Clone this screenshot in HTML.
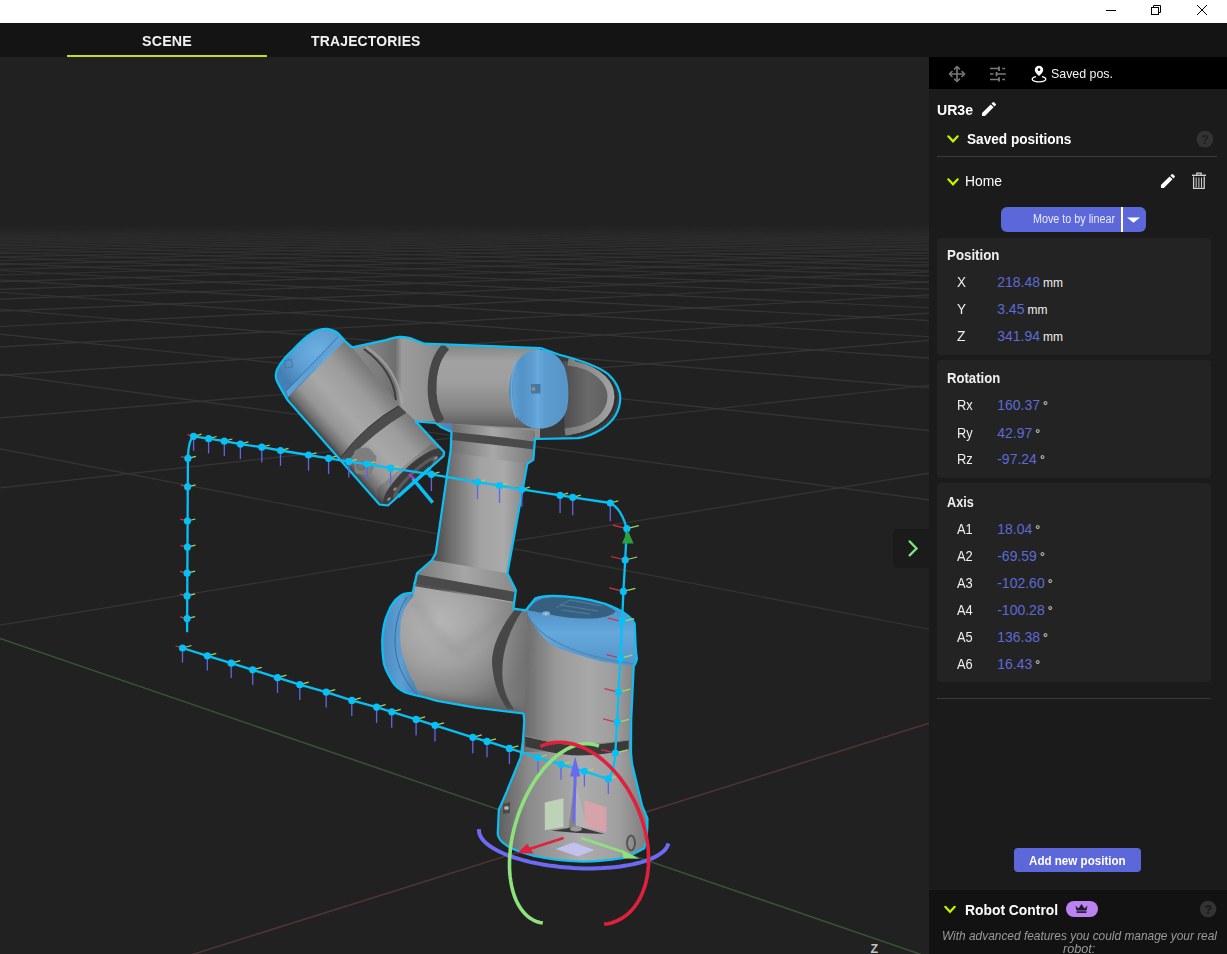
<!DOCTYPE html>
<html><head><meta charset="utf-8">
<style>
*{margin:0;padding:0;box-sizing:border-box}
html,body{width:1227px;height:954px;overflow:hidden;background:#222;font-family:"Liberation Sans",sans-serif;color:#fff}
.abs{position:absolute}
.t{position:absolute;white-space:nowrap;line-height:1}
svg{position:absolute;left:0;top:0}
</style></head><body>
<div class="abs" style="left:0;top:57px;width:929px;height:897px;background:#212121"></div>
<svg width="1227" height="954" viewBox="0 0 1227 954" style="position:absolute;left:0;top:0"><defs><linearGradient id="fog" gradientUnits="userSpaceOnUse" x1="0" y1="202.0" x2="0" y2="954"><stop offset="0.0000" stop-color="#353535" stop-opacity="0.000"/><stop offset="0.0003" stop-color="#353535" stop-opacity="0.000"/><stop offset="0.0014" stop-color="#353535" stop-opacity="0.000"/><stop offset="0.0034" stop-color="#353535" stop-opacity="0.000"/><stop offset="0.0063" stop-color="#353535" stop-opacity="0.000"/><stop offset="0.0103" stop-color="#353535" stop-opacity="0.000"/><stop offset="0.0154" stop-color="#353535" stop-opacity="0.000"/><stop offset="0.0216" stop-color="#353535" stop-opacity="0.000"/><stop offset="0.0290" stop-color="#353535" stop-opacity="0.000"/><stop offset="0.0376" stop-color="#353535" stop-opacity="0.088"/><stop offset="0.0474" stop-color="#353535" stop-opacity="0.346"/><stop offset="0.0584" stop-color="#353535" stop-opacity="0.533"/><stop offset="0.0707" stop-color="#353535" stop-opacity="0.672"/><stop offset="0.0844" stop-color="#353535" stop-opacity="0.779"/><stop offset="0.0993" stop-color="#353535" stop-opacity="0.862"/><stop offset="0.1156" stop-color="#353535" stop-opacity="0.929"/><stop offset="0.1332" stop-color="#353535" stop-opacity="0.982"/><stop offset="0.1522" stop-color="#353535" stop-opacity="1.000"/><stop offset="0.1726" stop-color="#353535" stop-opacity="1.000"/><stop offset="0.1944" stop-color="#353535" stop-opacity="1.000"/><stop offset="0.2176" stop-color="#353535" stop-opacity="1.000"/><stop offset="0.2423" stop-color="#353535" stop-opacity="1.000"/><stop offset="0.2684" stop-color="#353535" stop-opacity="1.000"/><stop offset="0.2960" stop-color="#353535" stop-opacity="1.000"/><stop offset="0.3250" stop-color="#353535" stop-opacity="1.000"/><stop offset="0.3556" stop-color="#353535" stop-opacity="1.000"/><stop offset="0.3876" stop-color="#353535" stop-opacity="1.000"/><stop offset="0.4212" stop-color="#353535" stop-opacity="1.000"/><stop offset="0.4563" stop-color="#353535" stop-opacity="1.000"/><stop offset="0.4929" stop-color="#353535" stop-opacity="1.000"/><stop offset="0.5310" stop-color="#353535" stop-opacity="1.000"/><stop offset="0.5708" stop-color="#353535" stop-opacity="1.000"/><stop offset="0.6121" stop-color="#353535" stop-opacity="1.000"/><stop offset="0.6549" stop-color="#353535" stop-opacity="1.000"/><stop offset="0.6994" stop-color="#353535" stop-opacity="1.000"/><stop offset="0.7454" stop-color="#353535" stop-opacity="1.000"/><stop offset="0.7931" stop-color="#353535" stop-opacity="1.000"/><stop offset="0.8424" stop-color="#353535" stop-opacity="1.000"/><stop offset="0.8933" stop-color="#353535" stop-opacity="1.000"/><stop offset="0.9458" stop-color="#353535" stop-opacity="1.000"/><stop offset="1.0000" stop-color="#353535" stop-opacity="1.000"/></linearGradient><clipPath id="silh"><path d="M327.1 328.8 C334 330, 339 333, 341.5 337 L344.9 341 L352.2 347.3 L385.8 340.1 C392 338, 396 337, 400.3 336.8 C405 337, 409 337.5, 412.4 338.9 L424.4 343.7 L540.6 348.1 L559.3 354.7 C580 360, 598 366, 608 374 C617 382, 620.5 392, 620.3 398 C620 410, 614 421, 602.4 428.7 C592 435, 585 437.5, 578.1 438.1 L535 439 L533.3 459.8 L527.3 463.8 L507.4 573.3 L515.9 590.2 L513.4 608.6 L525.9 610.3 L535 598.6 C540 596.5, 546 595.8, 552.1 595.8 C565 596, 572 597, 578.6 597.9 C590 599.5, 598 601.5, 605.1 603.8 C615 607.5, 621 610.5, 626.3 614.4 C631 618, 634 621, 634.7 623.9 L635.8 649.3 L636.9 658.9 C636 663, 634.5 665, 633.7 666.3 L631.2 720 L631 752.5 L632 763.5 L642 805.3 L647.5 818.6 C647.5 830, 646.5 842, 644.2 848.3 C636 853, 630 856, 622.1 858.2 C605 861, 590 861.8, 578.1 861.5 C560 860.5, 545 858.5, 534 856 C522 852.5, 512 849, 507.6 846.1 C501 842, 498 838, 497.7 834 L498.8 809.7 L506.5 792.1 L520.6 757.4 L522.8 742 L524.3 720 L523.4 713.5 L475.6 707.6 L437.1 700.9 L425.3 697.5 C415 695.5, 410 694, 405.2 692.5 C398 689, 394 685, 391.8 680.8 C386 671, 383.5 666, 383.4 660.6 C382 650, 382 642, 382.5 635.5 C383.5 625, 385 619, 387.6 613.7 C390 607, 392 604, 395.1 600.3 C399 596, 402 594.5, 405.2 593.5 L412.7 592.7 L416.9 573.4 L432 560 L435.7 553.4 L450.7 449.8 L451.5 432 L440.6 427 L435.6 423 L415.7 421.5 L444.1 451.9 L443.6 455.9 L387.9 505.5 L379.5 504.5 L287.3 399.7 C283 392, 279 386, 276.5 380 C275 375, 276 370, 278.9 366.1 C283 360, 287 355, 291.4 351.4 C298 344, 305 337, 312.4 332.6 C317 330, 322 328.5, 327.1 328.8 Z"/></clipPath>
<linearGradient id="gArm" gradientUnits="userSpaceOnUse" x1="0.0" y1="345.0" x2="0.0" y2="428.0"><stop offset="0.000" stop-color="#858585"/><stop offset="0.200" stop-color="#a2a2a2"/><stop offset="0.450" stop-color="#9e9e9e"/><stop offset="0.750" stop-color="#868686"/><stop offset="1.000" stop-color="#5a5a5a"/></linearGradient>
<linearGradient id="gHous" gradientUnits="userSpaceOnUse" x1="560.0" y1="0.0" x2="612.0" y2="0.0"><stop offset="0.000" stop-color="#4a4a4a"/><stop offset="0.550" stop-color="#6a6a6a"/><stop offset="1.000" stop-color="#5e5e5e"/></linearGradient>
<linearGradient id="gRing" gradientUnits="userSpaceOnUse" x1="565.0" y1="0.0" x2="612.0" y2="0.0"><stop offset="0.000" stop-color="#7a7a7a"/><stop offset="1.000" stop-color="#a2a2a2"/></linearGradient>
<linearGradient id="gCap1" gradientUnits="userSpaceOnUse" x1="509.0" y1="0.0" x2="569.0" y2="0.0"><stop offset="0.000" stop-color="#4a86ba"/><stop offset="0.080" stop-color="#5d9dd0"/><stop offset="0.200" stop-color="#5292c6"/><stop offset="0.380" stop-color="#5c9ccf"/><stop offset="0.480" stop-color="#68aadd"/><stop offset="0.600" stop-color="#5c9ccf"/><stop offset="1.000" stop-color="#5794c8"/></linearGradient>
<linearGradient id="gW2" gradientUnits="userSpaceOnUse" x1="355.0" y1="0.0" x2="445.0" y2="0.0"><stop offset="0.000" stop-color="#8a8a8a"/><stop offset="0.300" stop-color="#7a7a7a"/><stop offset="0.450" stop-color="#6e6e6e"/><stop offset="0.520" stop-color="#9c9c9c"/><stop offset="0.750" stop-color="#949494"/><stop offset="1.000" stop-color="#858585"/></linearGradient>
<linearGradient id="gFore" gradientUnits="userSpaceOnUse" x1="436.0" y1="0.0" x2="533.0" y2="0.0"><stop offset="0.000" stop-color="#4e4e4e"/><stop offset="0.150" stop-color="#6e6e6e"/><stop offset="0.450" stop-color="#a2a2a2"/><stop offset="0.700" stop-color="#aaaaaa"/><stop offset="0.900" stop-color="#8a8a8a"/><stop offset="1.000" stop-color="#5e5e5e"/></linearGradient>
<linearGradient id="gCol" gradientUnits="userSpaceOnUse" x1="450.0" y1="0.0" x2="535.0" y2="0.0"><stop offset="0.000" stop-color="#6a6a6a"/><stop offset="0.500" stop-color="#a8a8a8"/><stop offset="1.000" stop-color="#7a7a7a"/></linearGradient>
<linearGradient id="gCol2" gradientUnits="userSpaceOnUse" x1="414.0" y1="0.0" x2="515.0" y2="0.0"><stop offset="0.000" stop-color="#777"/><stop offset="0.500" stop-color="#a6a6a6"/><stop offset="1.000" stop-color="#8a8a8a"/></linearGradient>
<linearGradient id="gW3" gradientUnits="userSpaceOnUse" x1="324.0" y1="442.0" x2="384.4" y2="388.1"><stop offset="0.000" stop-color="#3a3a3a"/><stop offset="0.080" stop-color="#6a6a6a"/><stop offset="0.220" stop-color="#959595"/><stop offset="0.450" stop-color="#a8a8a8"/><stop offset="0.750" stop-color="#9c9c9c"/><stop offset="1.000" stop-color="#7a7a7a"/></linearGradient>
<linearGradient id="gW3e" gradientUnits="userSpaceOnUse" x1="380.0" y1="500.0" x2="440.0" y2="450.0"><stop offset="0.000" stop-color="#8a8a8a"/><stop offset="1.000" stop-color="#6a6a6a"/></linearGradient>
<radialGradient id="gCap3" gradientUnits="userSpaceOnUse" cx="318.0" cy="352.0" r="42.0"><stop offset="0.000" stop-color="#6cb0e2"/><stop offset="0.550" stop-color="#5d9ed2"/><stop offset="1.000" stop-color="#4580b4"/></radialGradient>
<linearGradient id="gElb" gradientUnits="userSpaceOnUse" x1="420.0" y1="600.0" x2="470.0" y2="705.0"><stop offset="0.000" stop-color="#b0b0b0"/><stop offset="0.450" stop-color="#a0a0a0"/><stop offset="1.000" stop-color="#6e6e6e"/></linearGradient>
<linearGradient id="gElb2" gradientUnits="userSpaceOnUse" x1="0.0" y1="620.0" x2="0.0" y2="712.0"><stop offset="0.000" stop-color="#9a9a9a"/><stop offset="0.600" stop-color="#8a8a8a"/><stop offset="1.000" stop-color="#6a6a6a"/></linearGradient>
<radialGradient id="gElbR" gradientUnits="userSpaceOnUse" cx="440.0" cy="622.0" r="95.0"><stop offset="0.000" stop-color="#b6b6b6"/><stop offset="0.450" stop-color="#a2a2a2"/><stop offset="0.800" stop-color="#858585"/><stop offset="1.000" stop-color="#6c6c6c"/></radialGradient>
<linearGradient id="gElbS" gradientUnits="userSpaceOnUse" x1="500.0" y1="0.0" x2="530.0" y2="0.0"><stop offset="0.000" stop-color="#8a8a8a"/><stop offset="1.000" stop-color="#707070"/></linearGradient>
<filter id="bl4" x="-50%" y="-50%" width="200%" height="200%"><feGaussianBlur stdDeviation="4"/></filter>
<filter id="bl2" x="-50%" y="-50%" width="200%" height="200%"><feGaussianBlur stdDeviation="2"/></filter>
<linearGradient id="gElbC" gradientUnits="userSpaceOnUse" x1="383.0" y1="0.0" x2="414.0" y2="0.0"><stop offset="0.000" stop-color="#4d8cc2"/><stop offset="0.600" stop-color="#5c9ed3"/><stop offset="1.000" stop-color="#4a86ba"/></linearGradient>
<linearGradient id="gSh" gradientUnits="userSpaceOnUse" x1="524.0" y1="0.0" x2="633.0" y2="0.0"><stop offset="0.000" stop-color="#6a6a6a"/><stop offset="0.300" stop-color="#9a9a9a"/><stop offset="0.600" stop-color="#a8a8a8"/><stop offset="0.850" stop-color="#9c9c9c"/><stop offset="1.000" stop-color="#858585"/></linearGradient>
<linearGradient id="gCap2" gradientUnits="userSpaceOnUse" x1="0.0" y1="600.0" x2="0.0" y2="666.0"><stop offset="0.000" stop-color="#4a88be"/><stop offset="0.500" stop-color="#64a8dc"/><stop offset="1.000" stop-color="#5494c8"/></linearGradient>
<linearGradient id="gBase" gradientUnits="userSpaceOnUse" x1="498.0" y1="0.0" x2="648.0" y2="0.0"><stop offset="0.000" stop-color="#5e5e5e"/><stop offset="0.200" stop-color="#8a8a8a"/><stop offset="0.550" stop-color="#acacac"/><stop offset="0.800" stop-color="#a0a0a0"/><stop offset="1.000" stop-color="#7a7a7a"/></linearGradient><clipPath id="sc"><rect x="0" y="57" width="929" height="897"/></clipPath></defs><g clip-path="url(#sc)"><g stroke="url(#fog)" stroke-width="1.2" fill="none"><path d="M0.0 448.96L929.0 629.27"/><path d="M0.0 374.19L929.0 499.91"/><path d="M0.0 334.17L929.0 430.68"/><path d="M0.0 309.25L929.0 387.55"/><path d="M0.0 292.23L929.0 358.11"/><path d="M0.0 279.88L929.0 336.74"/><path d="M0.0 270.50L929.0 320.51"/><path d="M0.0 263.13L929.0 307.77"/><path d="M0.0 257.20L929.0 297.50"/><path d="M0.0 252.32L929.0 289.05"/><path d="M0.0 248.23L929.0 281.98"/><path d="M0.0 244.75L929.0 275.97"/><path d="M0.0 241.76L929.0 270.80"/><path d="M0.0 239.16L929.0 266.30"/><path d="M0.0 236.89L929.0 262.36"/><path d="M0.0 234.87L929.0 258.87"/><path d="M0.0 233.07L929.0 255.76"/><path d="M0.0 231.46L929.0 252.98"/><path d="M0.0 230.01L929.0 250.46"/><path d="M0.0 228.70L929.0 248.19"/><path d="M0.0 227.50L929.0 246.12"/><path d="M0.0 226.41L929.0 244.23"/><path d="M0.0 225.40L929.0 242.49"/><path d="M0.0 224.48L929.0 240.89"/><path d="M0.0 223.62L929.0 239.41"/><path d="M0.0 222.83L929.0 238.04"/><path d="M0.0 222.09L929.0 236.77"/><path d="M0.0 221.41L929.0 235.58"/><path d="M0.0 220.77L929.0 234.47"/><path d="M0.0 220.17L929.0 233.43"/><path d="M0.0 219.61L929.0 232.46"/><path d="M0.0 219.08L929.0 231.55"/><path d="M0.0 218.58L929.0 230.68"/><path d="M0.0 218.11L929.0 229.87"/><path d="M0.0 217.67L929.0 229.10"/><path d="M0.0 217.25L929.0 228.38"/><path d="M0.0 216.85L929.0 227.69"/><path d="M0.0 216.47L929.0 227.04"/><path d="M0.0 216.11L929.0 226.41"/><path d="M0.0 215.77L929.0 225.82"/><path d="M0.0 215.44L929.0 225.26"/><path d="M0.0 215.13L929.0 224.72"/><path d="M0.0 214.84L929.0 224.21"/><path d="M0.0 214.55L929.0 223.72"/><path d="M0.0 214.28L929.0 223.25"/><path d="M0.0 214.02L929.0 222.80"/><path d="M0.0 213.77L929.0 222.37"/><path d="M0.0 213.54L929.0 221.96"/><path d="M0.0 213.31L929.0 221.56"/><path d="M0.0 213.09L929.0 221.18"/><path d="M0.0 212.87L929.0 220.81"/><path d="M0.0 212.67L929.0 220.46"/><path d="M0.0 212.47L929.0 220.12"/><path d="M0.0 212.28L929.0 219.79"/><path d="M0.0 212.10L929.0 219.48"/><path d="M0.0 211.92L929.0 219.17"/><path d="M0.0 211.75L929.0 218.88"/><path d="M0.0 211.59L929.0 218.59"/><path d="M0.0 211.43L929.0 218.32"/><path d="M0.0 211.28L929.0 218.05"/><path d="M0.0 211.13L929.0 217.79"/><path d="M0.0 210.98L929.0 217.54"/><path d="M0.0 210.84L929.0 217.30"/><path d="M0.0 210.71L929.0 217.07"/><path d="M0.0 210.58L929.0 216.84"/><path d="M0.0 210.45L929.0 216.62"/><path d="M0.0 210.33L929.0 216.41"/><path d="M0.0 210.21L929.0 216.20"/><path d="M0.0 210.09L929.0 216.00"/><path d="M0.0 209.98L929.0 215.80"/><path d="M0.0 209.87L929.0 215.61"/><path d="M0.0 209.76L929.0 215.42"/><path d="M0.0 209.65L929.0 215.24"/><path d="M0.0 209.55L929.0 215.07"/><path d="M0.0 209.45L929.0 214.90"/><path d="M0.0 209.36L929.0 214.73"/><path d="M0.0 209.26L929.0 214.57"/><path d="M0.0 209.17L929.0 214.41"/><path d="M0.0 209.08L929.0 214.25"/><path d="M0.0 625.05L929.0 473.14"/><path d="M0.0 487.93L929.0 385.26"/><path d="M0.0 417.94L929.0 340.40"/><path d="M0.0 375.47L929.0 313.18"/><path d="M0.0 346.97L929.0 294.91"/><path d="M0.0 326.51L929.0 281.80"/><path d="M0.0 311.11L929.0 271.93"/><path d="M0.0 299.10L929.0 264.23"/><path d="M0.0 289.47L929.0 258.06"/><path d="M0.0 281.58L929.0 253.00"/><path d="M0.0 274.99L929.0 248.78"/><path d="M0.0 269.42L929.0 245.21"/><path d="M0.0 264.63L929.0 242.14"/><path d="M0.0 260.48L929.0 239.48"/><path d="M0.0 256.84L929.0 237.15"/><path d="M0.0 253.63L929.0 235.09"/><path d="M0.0 250.78L929.0 233.26"/><path d="M0.0 248.22L929.0 231.62"/><path d="M0.0 245.92L929.0 230.15"/><path d="M0.0 243.84L929.0 228.81"/><path d="M0.0 241.94L929.0 227.60"/><path d="M0.0 240.21L929.0 226.49"/><path d="M0.0 238.63L929.0 225.47"/><path d="M0.0 237.17L929.0 224.54"/><path d="M0.0 235.82L929.0 223.67"/><path d="M0.0 234.57L929.0 222.87"/><path d="M0.0 233.41L929.0 222.13"/><path d="M0.0 232.33L929.0 221.44"/><path d="M0.0 231.32L929.0 220.79"/><path d="M0.0 230.38L929.0 220.19"/><path d="M0.0 229.49L929.0 219.62"/><path d="M0.0 228.66L929.0 219.09"/><path d="M0.0 227.88L929.0 218.59"/><path d="M0.0 227.14L929.0 218.11"/><path d="M0.0 226.45L929.0 217.67"/><path d="M0.0 225.79L929.0 217.25"/><path d="M0.0 225.16L929.0 216.85"/><path d="M0.0 224.57L929.0 216.47"/><path d="M0.0 224.01L929.0 216.10"/><path d="M0.0 223.47L929.0 215.76"/><path d="M0.0 222.96L929.0 215.43"/><path d="M0.0 222.47L929.0 215.12"/><path d="M0.0 222.01L929.0 214.82"/><path d="M0.0 221.57L929.0 214.54"/><path d="M0.0 221.14L929.0 214.27"/><path d="M0.0 220.74L929.0 214.01"/><path d="M0.0 220.35L929.0 213.76"/><path d="M0.0 219.97L929.0 213.52"/><path d="M0.0 219.61L929.0 213.29"/><path d="M0.0 219.27L929.0 213.07"/><path d="M0.0 218.94L929.0 212.85"/><path d="M0.0 218.62L929.0 212.65"/><path d="M0.0 218.31L929.0 212.45"/><path d="M0.0 218.01L929.0 212.26"/><path d="M0.0 217.73L929.0 212.08"/><path d="M0.0 217.45L929.0 211.90"/><path d="M0.0 217.19L929.0 211.73"/><path d="M0.0 216.93L929.0 211.57"/><path d="M0.0 216.68L929.0 211.41"/><path d="M0.0 216.44L929.0 211.26"/><path d="M0.0 216.21L929.0 211.11"/><path d="M0.0 215.98L929.0 210.96"/><path d="M0.0 215.77L929.0 210.82"/><path d="M0.0 215.55L929.0 210.69"/><path d="M0.0 215.35L929.0 210.56"/><path d="M0.0 215.15L929.0 210.43"/><path d="M0.0 214.96L929.0 210.30"/><path d="M0.0 214.77L929.0 210.18"/><path d="M0.0 214.59L929.0 210.07"/><path d="M0.0 214.41L929.0 209.95"/><path d="M0.0 214.24L929.0 209.84"/><path d="M0.0 214.07L929.0 209.74"/><path d="M0.0 213.91L929.0 209.63"/><path d="M0.0 213.75L929.0 209.53"/><path d="M0.0 213.59L929.0 209.43"/><path d="M0.0 213.44L929.0 209.33"/><path d="M0.0 213.30L929.0 209.24"/><path d="M0.0 213.15L929.0 209.15"/><path d="M0.0 213.02L929.0 209.06"/></g>
<path d="M0 638.5L929 957.2" stroke="#365434" stroke-width="1.5"/>
<path d="M0 1014.9L929 723.2" stroke="#533333" stroke-width="1.5"/><path d="M327.1 328.8 C334 330, 339 333, 341.5 337 L344.9 341 L352.2 347.3 L385.8 340.1 C392 338, 396 337, 400.3 336.8 C405 337, 409 337.5, 412.4 338.9 L424.4 343.7 L540.6 348.1 L559.3 354.7 C580 360, 598 366, 608 374 C617 382, 620.5 392, 620.3 398 C620 410, 614 421, 602.4 428.7 C592 435, 585 437.5, 578.1 438.1 L535 439 L533.3 459.8 L527.3 463.8 L507.4 573.3 L515.9 590.2 L513.4 608.6 L525.9 610.3 L535 598.6 C540 596.5, 546 595.8, 552.1 595.8 C565 596, 572 597, 578.6 597.9 C590 599.5, 598 601.5, 605.1 603.8 C615 607.5, 621 610.5, 626.3 614.4 C631 618, 634 621, 634.7 623.9 L635.8 649.3 L636.9 658.9 C636 663, 634.5 665, 633.7 666.3 L631.2 720 L631 752.5 L632 763.5 L642 805.3 L647.5 818.6 C647.5 830, 646.5 842, 644.2 848.3 C636 853, 630 856, 622.1 858.2 C605 861, 590 861.8, 578.1 861.5 C560 860.5, 545 858.5, 534 856 C522 852.5, 512 849, 507.6 846.1 C501 842, 498 838, 497.7 834 L498.8 809.7 L506.5 792.1 L520.6 757.4 L522.8 742 L524.3 720 L523.4 713.5 L475.6 707.6 L437.1 700.9 L425.3 697.5 C415 695.5, 410 694, 405.2 692.5 C398 689, 394 685, 391.8 680.8 C386 671, 383.5 666, 383.4 660.6 C382 650, 382 642, 382.5 635.5 C383.5 625, 385 619, 387.6 613.7 C390 607, 392 604, 395.1 600.3 C399 596, 402 594.5, 405.2 593.5 L412.7 592.7 L416.9 573.4 L432 560 L435.7 553.4 L450.7 449.8 L451.5 432 L440.6 427 L435.6 423 L415.7 421.5 L444.1 451.9 L443.6 455.9 L387.9 505.5 L379.5 504.5 L287.3 399.7 C283 392, 279 386, 276.5 380 C275 375, 276 370, 278.9 366.1 C283 360, 287 355, 291.4 351.4 C298 344, 305 337, 312.4 332.6 C317 330, 322 328.5, 327.1 328.8 Z" fill="#8e8e8e"/>
<path d="M405.0 337.5 L424.4 343.7 L540.6 348.1 L545.0 429.0 L411.0 421.5 L405.0 410.0 Z" fill="url(#gArm)"/>
<path d="M540 348 L559.3 354.7 C580 360, 598 366, 608 374 C617 382, 620.5 392, 620.3 398 C620 410, 614 421, 602.4 428.7 C592 435, 585 437.5, 578.1 438.1 L540 439 Z" fill="#3a3a3a"/>
<path d="M563 361 C585 362, 606 375, 609.6 397 C608 415, 596 430, 564.6 431.1 Z" fill="url(#gHous)"/>
<path d="M568 362 C597 365, 611 382, 611 397 C610 414, 597 429, 565 432" fill="none" stroke="url(#gRing)" stroke-width="7"/>
<path d="M575 360 C602 366, 617 382, 616 398 C615 416, 600 430, 572 436" fill="none" stroke="#2e2e2e" stroke-width="2"/>
<path d="M446 346.5 C430 362, 427 400, 440.5 421.5" fill="none" stroke="#474747" stroke-width="8.5"/>
<path d="M539.2 349.8 C554 350, 563 360, 566 372 C569 385, 569 400, 566.9 409.2 C563 422, 552 428.8, 538.1 428.8 C520 428, 509.2 410, 509.2 390.8 C509.5 368, 520 350, 539.2 349.8 Z" fill="url(#gCap1)"/>
<path d="M517 360 C510 375, 509 400, 516 418" fill="none" stroke="#6aaee0" stroke-width="1.2"/>
<rect x="531" y="384" width="9.5" height="9.5" fill="#4778a4"/>
<circle cx="533.5" cy="389" r="2" fill="#a08c70"/>
<path d="M352.2 347.3 L385.8 340.1 C392 338, 396 337, 400.3 336.8 C405 337, 409 337.5, 412.4 338.9 L424.4 343.7 L446 346.5 C430 362, 428 400, 440 421 L415.7 421.5 L400.3 407 Z" fill="url(#gW2)"/>
<path d="M364 349 C382 362, 394 380, 396 400" fill="none" stroke="#3e3e3e" stroke-width="2"/>
<path d="M366 347 C386 360, 399 380, 402 404" fill="none" stroke="#a8a8a8" stroke-width="2.5" opacity="0.7"/>
<path d="M446 346.5 C430 362, 427 400, 440.5 421.5" fill="none" stroke="#474747" stroke-width="8.5"/>
<path d="M451.7 427.0 L535.0 431.0 L533.3 459.8 L527.3 463.8 L507.4 573.3 L515.9 590.2 L513.4 608.6 L412.7 592.7 L416.9 573.4 L432.0 560.0 L435.7 553.4 L450.7 449.8 Z" fill="url(#gFore)"/>
<path d="M451.5 424 L535 431 L534 459.8 L527.3 463.8 L450.7 452 Z" fill="url(#gCol)"/>
<path d="M452 436 C480 439, 510 442, 534 445.5" fill="none" stroke="#4a4a4a" stroke-width="8"/>
<path d="M438 422.5 L452 424 L452.5 430.6 L446 429 Z" fill="#4f86b6"/>
<path d="M432 560 L507.4 573.3 L515.9 590.2 L514 600 L413 584 L416.9 573.4 Z" fill="url(#gCol2)"/>
<path d="M416.9 579.3 L514.2 596.9" fill="none" stroke="#4a4a4a" stroke-width="10"/>
<path d="M287.5 397.0 L342.5 337.0 L344.9 341.0 L352.2 347.3 L400.3 407.0 L415.7 421.5 L444.1 451.9 L443.6 455.9 L387.9 505.5 L379.5 504.5 L287.3 399.7 Z" fill="url(#gW3)"/>
<path d="M376.9 488.7 L431.6 443.9 L444.1 451.9 L443.6 455.9 L387.9 505.5 L379.5 504.5 Z" fill="#000" opacity="0.12"/>
<path d="M376.9 488.7 L431.6 443.9" stroke="#666" stroke-width="0.7" stroke-dasharray="1.5 2" opacity="0.7"/>
<g clip-path="url(#silh)">
<ellipse cx="413" cy="477" rx="40" ry="11" transform="rotate(-43.5 413 477)" fill="#3c3c3c"/>
<ellipse cx="415" cy="477" rx="30" ry="6" transform="rotate(-43.5 415 477)" fill="#5a5a5a"/>
<ellipse cx="415.5" cy="477.5" rx="24" ry="3.5" transform="rotate(-43.5 415.5 477.5)" fill="#383838"/>
<ellipse cx="389" cy="499" rx="2.2" ry="1.2" transform="rotate(-41 389 499)" fill="#888"/><ellipse cx="395" cy="489" rx="2.2" ry="1.2" transform="rotate(-41 395 489)" fill="#888"/><ellipse cx="436" cy="458" rx="2.2" ry="1.2" transform="rotate(-41 436 458)" fill="#888"/>
</g>
<path d="M341 457.1 Q365 425 398.9 405.8 L406.4 412.7 Q374 432 349.4 458.8 Z" fill="#4c4c4c"/>
<path d="M341 457.1 Q365 425 398.9 405.8" fill="none" stroke="#333" stroke-width="1"/>
<path d="M354 452 Q356 449 359 448.5 L366 447.5 Q369 447.5 371 450 L376 456 Q377 458 376 461 L372 472 Q370.5 475 367 475 L358 474 Q355 473.5 354.5 470 Z" fill="#7e7e7e"/>
<circle cx="361" cy="466" r="3.8" fill="#767676" stroke="#5e5e5e" stroke-width="0.8"/>
<path d="M342.5 337.5 L344.9 341 L288 397.5 L287.3 399.7 C283 392, 279 386, 276.5 380 C275 375, 276 370, 278.9 366.1 C283 360, 287 355, 291.4 351.4 C298 344, 305 337, 312.4 332.6 C317 330, 322 328.5, 327.1 328.8 C334 330, 339 333, 342.5 337.5 Z" fill="url(#gCap3)"/>
<path d="M286.2 391.2 L338.3 336.6 L343 338 L288.5 396.5 Z" fill="#5fa1d5"/>
<path d="M286.2 391.2 L338.3 336.6" stroke="#3d6f9c" stroke-width="0.9"/>
<path d="M284.5 360.5 L291.5 359.6 L292.4 367 L285.5 368.1 Z" fill="none" stroke="#3f72a0" stroke-width="0.8"/>
<path d="M412.7 592.7 L513.4 608.6 L525.9 610.3 L530 650 L523.4 713.5 L475.6 707.6 L437.1 700.9 L425.3 697.5 C415 695.5, 410 694, 405.2 692.5 C398 689, 394 685, 391.8 680.8 C386 671, 383.5 666, 383.4 660.6 C382 650, 382 642, 382.5 635.5 C383.5 625, 385 619, 387.6 613.7 C390 607, 392 604, 395.1 600.3 C399 596, 402 594.5, 405.2 593.5 Z" fill="url(#gElb)"/>
<path d="M414 586 L514 603 L513.4 608.6 L525.9 610.3 L530 650 L523.4 713.5 L475.6 707.6 L437.1 700.9 L425.3 697.5 C415 695.5, 410 694, 405.2 692.5 C398 689, 394 685, 391.8 680.8 C386 671, 383.5 666, 383.4 660.6 C382 650, 382 642, 382.5 635.5 C383.5 625, 385 619, 387.6 613.7 C390 607, 392 604, 395.1 600.3 C399 596, 402 594.5, 405.2 593.5 L412.7 592.7 Z" fill="url(#gElbR)"/>
<path d="M514.2 610.3 L525.9 610.3 L530 650 L523.4 713.5 L507 709 C500 700, 494 685, 495 667 C495 650, 502 628, 514.2 610.3 Z" fill="url(#gElbS)" opacity="0.7"/>
<path d="M514.2 610.3 C500 628, 490 650, 492.4 667.3 C494 685, 500 700, 507.5 709.3 L514.2 709.3 C507 700, 501 685, 502.5 667.3 C503 650, 510 628, 522.6 610.3 Z" fill="#474747"/>
<g clip-path="url(#silh)"><path d="M416 600 C425 620, 440 640, 458 652 C470 640, 490 625, 512 612" fill="none" stroke="#707070" stroke-width="7" filter="url(#bl4)" opacity="0.18"/>
<path d="M400 700 C440 708, 480 714, 522 718" fill="none" stroke="#555" stroke-width="18" filter="url(#bl4)" opacity="0.7"/></g>
<path d="M412.7 592.7 L413.6 596 C405 605, 401.8 615.3, 401 620 C400 628, 400.2 635.5, 400.2 640 C401 650, 402 655, 404.4 660.6 C407 670, 410 676, 413.6 682.4 C417 690, 420 694, 425.3 697.5 C415 695.5, 410 694, 405.2 692.5 C398 689, 394 685, 391.8 680.8 C386 671, 383.5 666, 383.4 660.6 C382 650, 382 642, 382.5 635.5 C383.5 625, 385 619, 387.6 613.7 C390 607, 392 604, 395.1 600.3 C399 596, 402 594.5, 405.2 593.5 Z" fill="url(#gElbC)"/>
<path d="M407 597 C399 608, 395 625, 395 640 C395 660, 402 680, 418 695" fill="none" stroke="#3b6e9c" stroke-width="1"/>
<path d="M525.9 610.3 L634.7 623.9 L636.9 658.9 L633.7 666.3 L631.2 720 L631 752.5 L524 752 L524.3 720 L523.4 713.5 L530 650 Z" fill="url(#gSh)"/>
<path d="M526.7 608.5 C530 603, 533 601, 536.2 599.5 C542 597, 546 596, 552.1 595.8 C565 596, 572 597, 578.6 597.9 C590 599.5, 598 601.5, 605.1 603.8 C615 607.5, 621 610.5, 626.3 614.4 C631 618, 634 621, 634.7 623.9 L635.8 649.3 L636.9 658.9 C636 663, 634.5 665, 633.7 666.3 C625 665, 610 663, 599.8 661 C585 657, 575 654, 568 651.5 C555 647, 550 644, 546.8 640.9 C538 632, 532 623, 527.7 614.4 Z" fill="url(#gCap2)"/>
<path d="M527.7 610.1 C533 602, 540 598, 550 597.4 C560 596.8, 570 597.5, 578.6 598.5 C595 601, 608 605, 615.7 611.2 C612 616, 600 618.6, 589.2 618.6 C575 618.5, 560 617, 548 614 C538 612, 532 611.5, 527.7 610.1 Z" fill="#365f80"/>
<path d="M556 608 L570 600 L602 606 M560 605 L598 611 M562 610 L590 614" fill="none" stroke="#5a84a4" stroke-width="0.8"/>
<path d="M528 616 C540 638, 570 655, 634 664" fill="none" stroke="#4a86b8" stroke-width="1.2"/>
<ellipse cx="546" cy="613.5" rx="4" ry="2.2" fill="#7ab0dc"/><circle cx="546" cy="614" r="1.3" fill="#c0c0c0"/>
<path d="M524 752 L631 752.5 L632 763.5 L642 805.3 L647.5 818.6 C647.5 830, 646.5 842, 644.2 848.3 C636 853, 630 856, 622.1 858.2 C605 861, 590 861.8, 578.1 861.5 C560 860.5, 545 858.5, 534 856 C522 852.5, 512 849, 507.6 846.1 C501 842, 498 838, 497.7 834 L498.8 809.7 L506.5 792.1 L520.6 757.4 Z" fill="url(#gBase)"/>
<path d="M503 804 L510 802 L510 813 L503 814 Z" fill="#4a4a4a"/><ellipse cx="506.5" cy="808" rx="2.5" ry="2" fill="#b0b0b0"/>
<ellipse cx="631" cy="843" rx="4" ry="7.5" fill="none" stroke="#555" stroke-width="2"/>
<path d="M525.2 736 C545 741, 560 744.5, 578.1 744.5 C600 744.3, 615 742, 628.7 740 L628.7 749 C615 752.5, 600 755.5, 578.1 755.5 C560 755, 545 751, 525.2 746.5 Z" fill="#3a3a3a"/>
<path d="M525.2 736 C545 741, 560 744.5, 578.1 744.5 C600 744.3, 615 742, 628.7 740" fill="none" stroke="#8a8a8a" stroke-width="1"/>
<path d="M327.1 328.8 C334 330, 339 333, 341.5 337 L344.9 341 L352.2 347.3 L385.8 340.1 C392 338, 396 337, 400.3 336.8 C405 337, 409 337.5, 412.4 338.9 L424.4 343.7 L540.6 348.1 L559.3 354.7 C580 360, 598 366, 608 374 C617 382, 620.5 392, 620.3 398 C620 410, 614 421, 602.4 428.7 C592 435, 585 437.5, 578.1 438.1 L535 439 L533.3 459.8 L527.3 463.8 L507.4 573.3 L515.9 590.2 L513.4 608.6 L525.9 610.3 L535 598.6 C540 596.5, 546 595.8, 552.1 595.8 C565 596, 572 597, 578.6 597.9 C590 599.5, 598 601.5, 605.1 603.8 C615 607.5, 621 610.5, 626.3 614.4 C631 618, 634 621, 634.7 623.9 L635.8 649.3 L636.9 658.9 C636 663, 634.5 665, 633.7 666.3 L631.2 720 L631 752.5 L632 763.5 L642 805.3 L647.5 818.6 C647.5 830, 646.5 842, 644.2 848.3 C636 853, 630 856, 622.1 858.2 C605 861, 590 861.8, 578.1 861.5 C560 860.5, 545 858.5, 534 856 C522 852.5, 512 849, 507.6 846.1 C501 842, 498 838, 497.7 834 L498.8 809.7 L506.5 792.1 L520.6 757.4 L522.8 742 L524.3 720 L523.4 713.5 L475.6 707.6 L437.1 700.9 L425.3 697.5 C415 695.5, 410 694, 405.2 692.5 C398 689, 394 685, 391.8 680.8 C386 671, 383.5 666, 383.4 660.6 C382 650, 382 642, 382.5 635.5 C383.5 625, 385 619, 387.6 613.7 C390 607, 392 604, 395.1 600.3 C399 596, 402 594.5, 405.2 593.5 L412.7 592.7 L416.9 573.4 L432 560 L435.7 553.4 L450.7 449.8 L451.5 432 L440.6 427 L435.6 423 L415.7 421.5 L444.1 451.9 L443.6 455.9 L387.9 505.5 L379.5 504.5 L287.3 399.7 C283 392, 279 386, 276.5 380 C275 375, 276 370, 278.9 366.1 C283 360, 287 355, 291.4 351.4 C298 344, 305 337, 312.4 332.6 C317 330, 322 328.5, 327.1 328.8 Z" fill="none" stroke="#0cbff5" stroke-width="2.2" stroke-linejoin="round"/><path d="M193.6 436.3V450.8" stroke="#6464e2" stroke-width="1.3"/>
<path d="M193.6 436.3l8 -2.2" stroke="#9ad86a" stroke-width="1.2"/>
<path d="M193.6 436.3l-6 -1.6" stroke="#d8304a" stroke-width="1.2"/>
<path d="M208.6 438.7V453.4" stroke="#6464e2" stroke-width="1.3"/>
<path d="M208.6 438.7l8 -2.2" stroke="#9ad86a" stroke-width="1.2"/>
<path d="M208.6 438.7l-6 -1.6" stroke="#d8304a" stroke-width="1.2"/>
<path d="M224.3 441.2V456.0" stroke="#6464e2" stroke-width="1.3"/>
<path d="M224.3 441.2l8 -2.2" stroke="#9ad86a" stroke-width="1.2"/>
<path d="M224.3 441.2l-6 -1.6" stroke="#d8304a" stroke-width="1.2"/>
<path d="M240.4 444.1V459.1" stroke="#6464e2" stroke-width="1.3"/>
<path d="M240.4 444.1l8 -2.2" stroke="#9ad86a" stroke-width="1.2"/>
<path d="M240.4 444.1l-6 -1.6" stroke="#d8304a" stroke-width="1.2"/>
<path d="M261.8 447.2V462.3" stroke="#6464e2" stroke-width="1.3"/>
<path d="M261.8 447.2l8 -2.2" stroke="#9ad86a" stroke-width="1.2"/>
<path d="M261.8 447.2l-6 -1.6" stroke="#d8304a" stroke-width="1.2"/>
<path d="M280.5 450.5V465.8" stroke="#6464e2" stroke-width="1.3"/>
<path d="M280.5 450.5l8 -2.2" stroke="#9ad86a" stroke-width="1.2"/>
<path d="M280.5 450.5l-6 -1.6" stroke="#d8304a" stroke-width="1.2"/>
<path d="M308.5 455.0V470.6" stroke="#6464e2" stroke-width="1.3"/>
<path d="M308.5 455.0l8 -2.2" stroke="#9ad86a" stroke-width="1.2"/>
<path d="M308.5 455.0l-6 -1.6" stroke="#d8304a" stroke-width="1.2"/>
<path d="M328.6 458.3V474.0" stroke="#6464e2" stroke-width="1.3"/>
<path d="M328.6 458.3l8 -2.2" stroke="#9ad86a" stroke-width="1.2"/>
<path d="M328.6 458.3l-6 -1.6" stroke="#d8304a" stroke-width="1.2"/>
<path d="M348.8 461.6V477.5" stroke="#6464e2" stroke-width="1.3"/>
<path d="M348.8 461.6l8 -2.2" stroke="#9ad86a" stroke-width="1.2"/>
<path d="M348.8 461.6l-6 -1.6" stroke="#d8304a" stroke-width="1.2"/>
<path d="M367.2 464.0V480.1" stroke="#6464e2" stroke-width="1.3"/>
<path d="M367.2 464.0l8 -2.2" stroke="#9ad86a" stroke-width="1.2"/>
<path d="M367.2 464.0l-6 -1.6" stroke="#d8304a" stroke-width="1.2"/>
<path d="M390.6 468.2V484.5" stroke="#6464e2" stroke-width="1.3"/>
<path d="M390.6 468.2l8 -2.2" stroke="#9ad86a" stroke-width="1.2"/>
<path d="M390.6 468.2l-6 -1.6" stroke="#d8304a" stroke-width="1.2"/>
<path d="M431.4 474.3V491.0" stroke="#6464e2" stroke-width="1.3"/>
<path d="M431.4 474.3l8 -2.2" stroke="#9ad86a" stroke-width="1.2"/>
<path d="M431.4 474.3l-6 -1.6" stroke="#d8304a" stroke-width="1.2"/>
<path d="M477.5 482.1V499.2" stroke="#6464e2" stroke-width="1.3"/>
<path d="M477.5 482.1l8 -2.2" stroke="#9ad86a" stroke-width="1.2"/>
<path d="M477.5 482.1l-6 -1.6" stroke="#d8304a" stroke-width="1.2"/>
<path d="M499.5 485.7V503.0" stroke="#6464e2" stroke-width="1.3"/>
<path d="M499.5 485.7l8 -2.2" stroke="#9ad86a" stroke-width="1.2"/>
<path d="M499.5 485.7l-6 -1.6" stroke="#d8304a" stroke-width="1.2"/>
<path d="M521.8 489.3V506.8" stroke="#6464e2" stroke-width="1.3"/>
<path d="M521.8 489.3l8 -2.2" stroke="#9ad86a" stroke-width="1.2"/>
<path d="M521.8 489.3l-6 -1.6" stroke="#d8304a" stroke-width="1.2"/>
<path d="M560.1 495.3V513.1" stroke="#6464e2" stroke-width="1.3"/>
<path d="M560.1 495.3l8 -2.2" stroke="#9ad86a" stroke-width="1.2"/>
<path d="M560.1 495.3l-6 -1.6" stroke="#d8304a" stroke-width="1.2"/>
<path d="M572.7 497.3V515.2" stroke="#6464e2" stroke-width="1.3"/>
<path d="M572.7 497.3l8 -2.2" stroke="#9ad86a" stroke-width="1.2"/>
<path d="M572.7 497.3l-6 -1.6" stroke="#d8304a" stroke-width="1.2"/>
<path d="M610.3 503.0V521.3" stroke="#6464e2" stroke-width="1.3"/>
<path d="M610.3 503.0l8 -2.2" stroke="#9ad86a" stroke-width="1.2"/>
<path d="M610.3 503.0l-6 -1.6" stroke="#d8304a" stroke-width="1.2"/>
<path d="M608.3 778.9V794.0" stroke="#6464e2" stroke-width="1.3"/>
<path d="M608.3 778.9l9 -2.5" stroke="#9ad86a" stroke-width="1.2"/>
<path d="M608.3 778.9l-7 -2" stroke="#d8304a" stroke-width="1.2"/>
<path d="M584.4 771.3V786.5" stroke="#6464e2" stroke-width="1.3"/>
<path d="M584.4 771.3l9 -2.5" stroke="#9ad86a" stroke-width="1.2"/>
<path d="M584.4 771.3l-7 -2" stroke="#d8304a" stroke-width="1.2"/>
<path d="M561.0 764.3V779.7" stroke="#6464e2" stroke-width="1.3"/>
<path d="M561.0 764.3l9 -2.5" stroke="#9ad86a" stroke-width="1.2"/>
<path d="M561.0 764.3l-7 -2" stroke="#d8304a" stroke-width="1.2"/>
<path d="M537.9 757.5V773.0" stroke="#6464e2" stroke-width="1.3"/>
<path d="M537.9 757.5l9 -2.5" stroke="#9ad86a" stroke-width="1.2"/>
<path d="M537.9 757.5l-7 -2" stroke="#d8304a" stroke-width="1.2"/>
<path d="M509.4 748.4V764.1" stroke="#6464e2" stroke-width="1.3"/>
<path d="M509.4 748.4l9 -2.5" stroke="#9ad86a" stroke-width="1.2"/>
<path d="M509.4 748.4l-7 -2" stroke="#d8304a" stroke-width="1.2"/>
<path d="M487.0 741.4V757.2" stroke="#6464e2" stroke-width="1.3"/>
<path d="M487.0 741.4l9 -2.5" stroke="#9ad86a" stroke-width="1.2"/>
<path d="M487.0 741.4l-7 -2" stroke="#d8304a" stroke-width="1.2"/>
<path d="M472.8 737.3V753.2" stroke="#6464e2" stroke-width="1.3"/>
<path d="M472.8 737.3l9 -2.5" stroke="#9ad86a" stroke-width="1.2"/>
<path d="M472.8 737.3l-7 -2" stroke="#d8304a" stroke-width="1.2"/>
<path d="M435.0 725.3V741.4" stroke="#6464e2" stroke-width="1.3"/>
<path d="M435.0 725.3l9 -2.5" stroke="#9ad86a" stroke-width="1.2"/>
<path d="M435.0 725.3l-7 -2" stroke="#d8304a" stroke-width="1.2"/>
<path d="M416.1 719.4V735.4" stroke="#6464e2" stroke-width="1.3"/>
<path d="M416.1 719.4l9 -2.5" stroke="#9ad86a" stroke-width="1.2"/>
<path d="M416.1 719.4l-7 -2" stroke="#d8304a" stroke-width="1.2"/>
<path d="M391.7 711.8V727.7" stroke="#6464e2" stroke-width="1.3"/>
<path d="M391.7 711.8l9 -2.5" stroke="#9ad86a" stroke-width="1.2"/>
<path d="M391.7 711.8l-7 -2" stroke="#d8304a" stroke-width="1.2"/>
<path d="M376.6 707.1V722.9" stroke="#6464e2" stroke-width="1.3"/>
<path d="M376.6 707.1l9 -2.5" stroke="#9ad86a" stroke-width="1.2"/>
<path d="M376.6 707.1l-7 -2" stroke="#d8304a" stroke-width="1.2"/>
<path d="M351.8 700.4V716.0" stroke="#6464e2" stroke-width="1.3"/>
<path d="M351.8 700.4l9 -2.5" stroke="#9ad86a" stroke-width="1.2"/>
<path d="M351.8 700.4l-7 -2" stroke="#d8304a" stroke-width="1.2"/>
<path d="M326.2 692.1V707.6" stroke="#6464e2" stroke-width="1.3"/>
<path d="M326.2 692.1l9 -2.5" stroke="#9ad86a" stroke-width="1.2"/>
<path d="M326.2 692.1l-7 -2" stroke="#d8304a" stroke-width="1.2"/>
<path d="M299.8 684.7V700.0" stroke="#6464e2" stroke-width="1.3"/>
<path d="M299.8 684.7l9 -2.5" stroke="#9ad86a" stroke-width="1.2"/>
<path d="M299.8 684.7l-7 -2" stroke="#d8304a" stroke-width="1.2"/>
<path d="M277.5 677.7V692.9" stroke="#6464e2" stroke-width="1.3"/>
<path d="M277.5 677.7l9 -2.5" stroke="#9ad86a" stroke-width="1.2"/>
<path d="M277.5 677.7l-7 -2" stroke="#d8304a" stroke-width="1.2"/>
<path d="M252.7 669.8V684.8" stroke="#6464e2" stroke-width="1.3"/>
<path d="M252.7 669.8l9 -2.5" stroke="#9ad86a" stroke-width="1.2"/>
<path d="M252.7 669.8l-7 -2" stroke="#d8304a" stroke-width="1.2"/>
<path d="M231.2 663.2V678.1" stroke="#6464e2" stroke-width="1.3"/>
<path d="M231.2 663.2l9 -2.5" stroke="#9ad86a" stroke-width="1.2"/>
<path d="M231.2 663.2l-7 -2" stroke="#d8304a" stroke-width="1.2"/>
<path d="M207.3 655.8V670.5" stroke="#6464e2" stroke-width="1.3"/>
<path d="M207.3 655.8l9 -2.5" stroke="#9ad86a" stroke-width="1.2"/>
<path d="M207.3 655.8l-7 -2" stroke="#d8304a" stroke-width="1.2"/>
<path d="M182.5 648.0V662.6" stroke="#6464e2" stroke-width="1.3"/>
<path d="M182.5 648.0l9 -2.5" stroke="#9ad86a" stroke-width="1.2"/>
<path d="M182.5 648.0l-7 -2" stroke="#d8304a" stroke-width="1.2"/>
<path d="M187.1 618.6l8 -2" stroke="#9ad86a" stroke-width="1.2"/>
<path d="M187.1 618.6l-7 -1.8" stroke="#d8304a" stroke-width="1.2"/>
<path d="M187.1 595.9l8 -2" stroke="#9ad86a" stroke-width="1.2"/>
<path d="M187.1 595.9l-7 -1.8" stroke="#d8304a" stroke-width="1.2"/>
<path d="M187.1 573.2l8 -2" stroke="#9ad86a" stroke-width="1.2"/>
<path d="M187.1 573.2l-7 -1.8" stroke="#d8304a" stroke-width="1.2"/>
<path d="M187.4 547.1l8 -2" stroke="#9ad86a" stroke-width="1.2"/>
<path d="M187.4 547.1l-7 -1.8" stroke="#d8304a" stroke-width="1.2"/>
<path d="M187.4 521.0l8 -2" stroke="#9ad86a" stroke-width="1.2"/>
<path d="M187.4 521.0l-7 -1.8" stroke="#d8304a" stroke-width="1.2"/>
<path d="M187.6 486.8l8 -2" stroke="#9ad86a" stroke-width="1.2"/>
<path d="M187.6 486.8l-7 -1.8" stroke="#d8304a" stroke-width="1.2"/>
<path d="M187.9 458.3l8 -2" stroke="#9ad86a" stroke-width="1.2"/>
<path d="M187.9 458.3l-7 -1.8" stroke="#d8304a" stroke-width="1.2"/>
<path d="M626.8 528.7l12 -3" stroke="#9ad86a" stroke-width="1.2"/>
<path d="M626.8 528.7l-14 -3.5" stroke="#d8304a" stroke-width="1.2"/>
<path d="M625.2 560.0l12 -3" stroke="#9ad86a" stroke-width="1.2"/>
<path d="M625.2 560.0l-14 -3.5" stroke="#d8304a" stroke-width="1.2"/>
<path d="M623.4 591.4l12 -3" stroke="#9ad86a" stroke-width="1.2"/>
<path d="M623.4 591.4l-14 -3.5" stroke="#d8304a" stroke-width="1.2"/>
<path d="M622.1 621.6l12 -3" stroke="#9ad86a" stroke-width="1.2"/>
<path d="M622.1 621.6l-14 -3.5" stroke="#d8304a" stroke-width="1.2"/>
<path d="M620.4 658.1l12 -3" stroke="#9ad86a" stroke-width="1.2"/>
<path d="M620.4 658.1l-14 -3.5" stroke="#d8304a" stroke-width="1.2"/>
<path d="M618.4 692.1l12 -3" stroke="#9ad86a" stroke-width="1.2"/>
<path d="M618.4 692.1l-14 -3.5" stroke="#d8304a" stroke-width="1.2"/>
<path d="M617.1 722.3l12 -3" stroke="#9ad86a" stroke-width="1.2"/>
<path d="M617.1 722.3l-14 -3.5" stroke="#d8304a" stroke-width="1.2"/>
<path d="M615.3 753.2l12 -3" stroke="#9ad86a" stroke-width="1.2"/>
<path d="M615.3 753.2l-14 -3.5" stroke="#d8304a" stroke-width="1.2"/>
<path d="M187.1 632.3 L187.9 458.3 Q188.5 440 193.6 436.3 L208.6 438.7 L224.3 441.2 L240.4 444.1 L261.8 447.2 L280.5 450.5 L308.5 455.0 L328.6 458.3 L348.8 461.6 L367.2 464.0 L390.6 468.2 L431.4 474.3 L477.5 482.1 L499.5 485.7 L521.8 489.3 L560.1 495.3 L572.7 497.3 L610.3 503.0 Q621 508 626.8 528.7 L625.2 560.0 L623.4 591.4 L622.1 621.6 L620.4 658.1 L618.4 692.1 L617.1 722.3 L615.3 753.2 Q614.5 770 608.3 778.9 L584.4 771.3 L561.0 764.3 L537.9 757.5 L509.4 748.4 L487.0 741.4 L472.8 737.3 L435.0 725.3 L416.1 719.4 L391.7 711.8 L376.6 707.1 L351.8 700.4 L326.2 692.1 L299.8 684.7 L277.5 677.7 L252.7 669.8 L231.2 663.2 L207.3 655.8 L182.5 648.0" fill="none" stroke="#06c0f6" stroke-width="2.3" stroke-linejoin="round"/>
<circle cx="187.1" cy="618.6" r="3.6" fill="#06c0f6"/>
<circle cx="187.1" cy="595.9" r="3.6" fill="#06c0f6"/>
<circle cx="187.1" cy="573.2" r="3.6" fill="#06c0f6"/>
<circle cx="187.4" cy="547.1" r="3.6" fill="#06c0f6"/>
<circle cx="187.4" cy="521.0" r="3.6" fill="#06c0f6"/>
<circle cx="187.6" cy="486.8" r="3.6" fill="#06c0f6"/>
<circle cx="187.9" cy="458.3" r="3.6" fill="#06c0f6"/>
<circle cx="193.6" cy="436.3" r="3.6" fill="#06c0f6"/>
<circle cx="208.6" cy="438.7" r="3.6" fill="#06c0f6"/>
<circle cx="224.3" cy="441.2" r="3.6" fill="#06c0f6"/>
<circle cx="240.4" cy="444.1" r="3.6" fill="#06c0f6"/>
<circle cx="261.8" cy="447.2" r="3.6" fill="#06c0f6"/>
<circle cx="280.5" cy="450.5" r="3.6" fill="#06c0f6"/>
<circle cx="308.5" cy="455.0" r="3.6" fill="#06c0f6"/>
<circle cx="328.6" cy="458.3" r="3.6" fill="#06c0f6"/>
<circle cx="348.8" cy="461.6" r="3.6" fill="#06c0f6"/>
<circle cx="367.2" cy="464.0" r="3.6" fill="#06c0f6"/>
<circle cx="390.6" cy="468.2" r="3.6" fill="#06c0f6"/>
<circle cx="431.4" cy="474.3" r="3.6" fill="#06c0f6"/>
<circle cx="477.5" cy="482.1" r="3.6" fill="#06c0f6"/>
<circle cx="499.5" cy="485.7" r="3.6" fill="#06c0f6"/>
<circle cx="521.8" cy="489.3" r="3.6" fill="#06c0f6"/>
<circle cx="560.1" cy="495.3" r="3.6" fill="#06c0f6"/>
<circle cx="572.7" cy="497.3" r="3.6" fill="#06c0f6"/>
<circle cx="610.3" cy="503.0" r="3.6" fill="#06c0f6"/>
<circle cx="626.8" cy="528.7" r="3.6" fill="#06c0f6"/>
<circle cx="625.2" cy="560.0" r="3.6" fill="#06c0f6"/>
<circle cx="623.4" cy="591.4" r="3.6" fill="#06c0f6"/>
<circle cx="622.1" cy="621.6" r="3.6" fill="#06c0f6"/>
<circle cx="620.4" cy="658.1" r="3.6" fill="#06c0f6"/>
<circle cx="618.4" cy="692.1" r="3.6" fill="#06c0f6"/>
<circle cx="617.1" cy="722.3" r="3.6" fill="#06c0f6"/>
<circle cx="615.3" cy="753.2" r="3.6" fill="#06c0f6"/>
<circle cx="608.3" cy="778.9" r="3.6" fill="#06c0f6"/>
<circle cx="584.4" cy="771.3" r="3.6" fill="#06c0f6"/>
<circle cx="561.0" cy="764.3" r="3.6" fill="#06c0f6"/>
<circle cx="537.9" cy="757.5" r="3.6" fill="#06c0f6"/>
<circle cx="509.4" cy="748.4" r="3.6" fill="#06c0f6"/>
<circle cx="487.0" cy="741.4" r="3.6" fill="#06c0f6"/>
<circle cx="472.8" cy="737.3" r="3.6" fill="#06c0f6"/>
<circle cx="435.0" cy="725.3" r="3.6" fill="#06c0f6"/>
<circle cx="416.1" cy="719.4" r="3.6" fill="#06c0f6"/>
<circle cx="391.7" cy="711.8" r="3.6" fill="#06c0f6"/>
<circle cx="376.6" cy="707.1" r="3.6" fill="#06c0f6"/>
<circle cx="351.8" cy="700.4" r="3.6" fill="#06c0f6"/>
<circle cx="326.2" cy="692.1" r="3.6" fill="#06c0f6"/>
<circle cx="299.8" cy="684.7" r="3.6" fill="#06c0f6"/>
<circle cx="277.5" cy="677.7" r="3.6" fill="#06c0f6"/>
<circle cx="252.7" cy="669.8" r="3.6" fill="#06c0f6"/>
<circle cx="231.2" cy="663.2" r="3.6" fill="#06c0f6"/>
<circle cx="207.3" cy="655.8" r="3.6" fill="#06c0f6"/>
<circle cx="182.5" cy="648.0" r="3.6" fill="#06c0f6"/>
<path d="M627.8 530 L633.6 543.4 L622 543.4 Z" fill="#2aa040"/>
<path d="M398 496.6 L430 468 M412.8 478.7 L432.7 502.6" stroke="#06c0f6" stroke-width="3.5" stroke-linecap="butt"/>
<path d="M409 474 L414 479" stroke="#c030e0" stroke-width="2"/>
<path d="M544.8 802.6 L563.5 798.2 L563.5 826.9 L544.8 830.2 Z" fill="#c4dcbc" fill-opacity="0.85"/>
<path d="M584.5 800.4 L606.5 807 L606.5 832.4 L584.5 826.9 Z" fill="#dea2aa" fill-opacity="0.85"/>
<path d="M555.8 848.9 L573.5 842.3 L594.4 850 L577.9 856.6 Z" fill="#c4c4f4" fill-opacity="0.9"/>
<path d="M574.8 779 L568.5 828 L576 829.5 Z" fill="#858585"/>
<path d="M574.8 779 L576 829.5 L587 828 Z" fill="#b4b4b4"/>
<path d="M551.7 830.7 L578 826.5 L604.5 834 L578 833 Z" fill="#3a3a3a"/>
<ellipse cx="576" cy="829" rx="6" ry="2.5" fill="#9a9a9a"/>
<path d="M479.1 829.1 L479.0 830.8 L479.2 832.5 L479.6 834.2 L480.3 835.8 L481.2 837.5 L482.4 839.2 L483.9 840.9 L485.5 842.6 L487.4 844.2 L489.6 845.8 L491.9 847.4 L494.5 849.0 L497.3 850.5 L500.3 852.0 L503.5 853.5 L506.9 854.9 L510.5 856.2 L514.2 857.5 L518.1 858.7 L522.2 859.9 L526.4 861.0 L530.7 862.1 L535.1 863.0 L539.7 863.9 L544.3 864.7 L549.0 865.5 L553.8 866.1 L558.6 866.7 L563.5 867.2 L568.4 867.6 L573.3 868.0 L578.2 868.2 L583.1 868.4 L587.9 868.4 L592.8 868.4 L597.6 868.3 L602.3 868.1 L606.9 867.8 L611.5 867.4 L615.9 867.0 L620.3 866.5 L624.5 865.8 L628.6 865.1 L632.5 864.4 L636.3 863.5 L639.9 862.6 L643.3 861.6 L646.6 860.5 L649.6 859.3 L652.5 858.1 L655.1 856.9 L657.5 855.6 L659.7 854.2 L661.7 852.8 L663.4 851.3 L664.9 849.8 L666.2 848.2 L667.1 846.7 L667.9 845.1 L668.4 843.4" fill="none" stroke="#6a6af2" stroke-width="4"/>
<path d="M598.9 746.2 L596.2 745.1 L593.5 744.4 L590.7 743.9 L587.7 743.6 L584.8 743.7 L581.7 744.0 L578.7 744.5 L575.6 745.4 L572.4 746.5 L569.3 747.9 L566.1 749.5 L563.0 751.4 L559.8 753.5 L556.7 755.9 L553.6 758.5 L550.6 761.4 L547.6 764.4 L544.6 767.7 L541.8 771.1 L539.0 774.8 L536.2 778.6 L533.6 782.6 L531.1 786.8 L528.7 791.1 L526.4 795.5 L524.2 800.0 L522.2 804.6 L520.3 809.4 L518.5 814.2 L516.9 819.0 L515.4 823.9 L514.1 828.8 L512.9 833.8 L511.9 838.7 L511.1 843.6 L510.4 848.5 L510.0 853.4 L509.6 858.2 L509.5 862.9 L509.5 867.5 L509.7 872.0 L510.1 876.4 L510.7 880.7 L511.4 884.9 L512.3 888.8 L513.3 892.6 L514.5 896.3 L515.9 899.7 L517.4 903.0 L519.1 906.0 L520.9 908.8 L522.9 911.4 L525.0 913.8 L527.2 915.9 L529.5 917.7 L532.0 919.3 L534.5 920.7 L537.2 921.8 L539.9 922.6 L542.8 923.1" fill="none" stroke="#8ee27c" stroke-width="3.6"/>
<path d="M540.4 746.5 L543.7 745.1 L547.1 744.0 L550.6 743.1 L554.2 742.6 L557.8 742.3 L561.6 742.3 L565.4 742.6 L569.2 743.2 L573.1 744.1 L576.9 745.2 L580.8 746.7 L584.7 748.4 L588.6 750.4 L592.4 752.6 L596.2 755.1 L600.0 757.8 L603.7 760.8 L607.3 764.0 L610.8 767.4 L614.2 771.1 L617.5 774.9 L620.7 778.9 L623.7 783.1 L626.7 787.4 L629.4 791.9 L632.0 796.5 L634.5 801.3 L636.7 806.1 L638.8 811.0 L640.7 816.0 L642.4 821.1 L643.9 826.1 L645.2 831.2 L646.3 836.4 L647.2 841.5 L647.9 846.5 L648.3 851.6 L648.5 856.6 L648.6 861.5 L648.4 866.3 L647.9 871.0 L647.3 875.6 L646.4 880.1 L645.4 884.4 L644.1 888.5 L642.6 892.5 L640.9 896.3 L639.1 899.9 L637.0 903.3 L634.8 906.5 L632.4 909.4 L629.8 912.1 L627.0 914.6 L624.1 916.8 L621.1 918.7 L617.9 920.4 L614.6 921.7 L611.2 922.9 L607.7 923.7 L604.1 924.2" fill="none" stroke="#e0203c" stroke-width="3.6"/>
<path d="M573.6 822.5 L575.2 776" stroke="#6a6aee" stroke-width="3"/>
<path d="M570 776.5 L580.4 776.5 L575.2 756.4 Z" fill="#6a6aee"/>
<path d="M563.5 837.9 L529.4 848.9" stroke="#e0203c" stroke-width="2.6"/>
<path d="M517.3 853.3 L527.2 843.8 L533.5 853.5 Z" fill="#e0203c"/>
<path d="M581.2 837.9 L624.1 852.2" stroke="#8ee27c" stroke-width="2.6"/>
<path d="M639.5 858.8 L621.5 849.5 L623.5 858.5 Z" fill="#8ee27c"/>
<text x="870.6" y="952.6" font-family="Liberation Sans" font-weight="bold" font-size="12.5" fill="#c4c4c4">Z</text></g></svg>

<div class="abs" style="left:0;top:0;width:1227px;height:23px;background:#fff"></div>
<div class="abs" style="left:0;top:23px;width:1227px;height:34px;background:#141414"></div>
<div class="abs" style="left:67px;top:55px;width:200px;height:2px;background:#c3df1b"></div>
<div class="abs" style="left:929px;top:57px;width:298px;height:897px;background:#1b1b1b"></div>
<div class="abs" style="left:929px;top:57px;width:298px;height:32px;background:#000"></div>
<div class="abs" style="left:929px;top:890px;width:298px;height:64px;background:#121212"></div>
<div class="abs" style="left:937px;top:156px;width:280px;height:1px;background:#3a3a3a"></div>
<div class="abs" style="left:1001px;top:207px;width:145px;height:25px;background:#5c68d9;border-radius:6px"></div>
<div class="abs" style="left:1121px;top:207px;width:2px;height:25px;background:#fff"></div>
<div class="abs" style="left:937px;top:237.5px;width:274px;height:117px;background:#232323;border-radius:4px"></div>
<div class="abs" style="left:937px;top:360px;width:274px;height:117.5px;background:#232323;border-radius:4px"></div>
<div class="abs" style="left:937px;top:483px;width:274px;height:199px;background:#232323;border-radius:4px"></div>
<div class="abs" style="left:937px;top:698px;width:274px;height:1px;background:#3a3a3a"></div>
<div class="abs" style="left:1014px;top:848px;width:127px;height:24px;background:#5c68d9;border-radius:4px"></div>
<div class="abs" style="left:1066px;top:901px;width:32px;height:16px;background:#bd82f1;border-radius:8px"></div>
<div class="abs" style="left:893px;top:529px;width:36px;height:39px;background:#1b1b1b;border-radius:5px 0 0 5px"></div>

<svg width="1227" height="954" viewBox="0 0 1227 954" style="position:absolute;left:0;top:0">
<!-- window controls -->
<line x1="1106" y1="10.5" x2="1116" y2="10.5" stroke="#000" stroke-width="1"/>
<rect x="1151.5" y="7.5" width="7" height="7" fill="none" stroke="#000" stroke-width="1"/>
<path d="M1153.5 7.5V5.5H1160.5V12.5H1158.5" fill="none" stroke="#000" stroke-width="1"/>
<path d="M1197 5L1207 15M1207 5L1197 15" stroke="#000" stroke-width="1"/>
<!-- move icon -->
<g stroke="#7a7a7a" stroke-width="1.6" fill="none" stroke-linecap="round" stroke-linejoin="round">
<path d="M957 67V81M950 74H964"/>
<path d="M954.5 69L957 66.5L959.5 69M954.5 79L957 81.5L959.5 79M952 71.5L949.5 74L952 76.5M962 71.5L964.5 74L962 76.5"/>
</g>
<!-- sliders -->
<g stroke="#7a7a7a" stroke-width="1.5" fill="none">
<path d="M990 68.5H999M1002.3 68.5H1005M990 74H993.5M996.5 74H1005.8M990 79.5H999M1002.3 79.5H1005"/>
<path d="M999 66.5V71M996.5 72V76.2M999 77.3V81.5" stroke-width="1.8"/>
</g>
<!-- pin -->
<path d="M1039 65.8C1036.6 65.8 1034.8 67.6 1034.8 70C1034.8 72.4 1039 76 1039 76C1039 76 1043.2 72.4 1043.2 70C1043.2 67.6 1041.4 65.8 1039 65.8Z" fill="#fff"/>
<circle cx="1039" cy="69.6" r="1.3" fill="#000"/>
<path d="M1036 76.6C1033.5 77.2 1032.2 78.1 1032.2 79.1C1032.2 80.6 1035.2 81.8 1039 81.8C1042.8 81.8 1045.8 80.6 1045.8 79.1C1045.8 78.1 1044.5 77.2 1042 76.6" fill="none" stroke="#fff" stroke-width="1.3"/>
<!-- pencils -->
<g fill="#fff">
<path transform="translate(979.7 99.6) scale(0.78)" d="M3 17.25V21h3.75L17.81 9.94l-3.75-3.75L3 17.25zM20.71 7.04c.39-.39.39-1.02 0-1.41l-2.34-2.34c-.39-.39-1.02-.39-1.41 0l-1.83 1.83 3.75 3.75 1.83-1.83z"/>
<path transform="translate(1158.6 171.6) scale(0.78)" d="M3 17.25V21h3.75L17.81 9.94l-3.75-3.75L3 17.25zM20.71 7.04c.39-.39.39-1.02 0-1.41l-2.34-2.34c-.39-.39-1.02-.39-1.41 0l-1.83 1.83 3.75 3.75 1.83-1.83z"/>
</g>
<!-- trash -->
<g fill="none" stroke="#d0d0d0">
<path d="M1192 175.3H1206" stroke-width="1.4"/>
<path d="M1196.8 175V173.2H1201.2V175" stroke-width="1.2"/>
<path d="M1193.6 176.5V188.3H1204.2V176.5" stroke-width="1.3"/>
<path d="M1196.2 177.5V187.5M1198.9 177.5V187.5M1201.5 177.5V187.5" stroke-width="1"/>
</g>
<!-- chevrons green -->
<g fill="none" stroke="#c6f500" stroke-width="2.2" stroke-linecap="round" stroke-linejoin="miter">
<path d="M948.3 136.3L953 141.3L957.7 136.3"/>
<path d="M948.3 179.3L953 184.3L957.7 179.3"/>
<path d="M945.3 906.8L950 911.8L954.7 906.8"/>
</g>
<!-- button dropdown triangle -->
<path d="M1127 217.6H1140L1133.5 222.8Z" fill="#fff"/>
<!-- question circles -->
<circle cx="1204.9" cy="139.2" r="8.4" fill="#333"/>
<text x="1204.9" y="144" font-family="Liberation Sans" font-weight="bold" font-size="12" fill="#1d1d1d" text-anchor="middle">?</text>
<circle cx="1208.1" cy="909.1" r="8.3" fill="#333"/>
<text x="1208.1" y="914" font-family="Liberation Sans" font-weight="bold" font-size="12" fill="#171717" text-anchor="middle">?</text>
<!-- crown -->
<path d="M1075.5 905.5L1078.5 908.5L1081.5 904L1084.5 908.5L1087.5 905.5L1086.5 910.5H1076.5Z" fill="#1a1a2a"/>
<rect x="1076.5" y="911.3" width="10" height="1.6" fill="#1a1a2a"/>
<!-- side chevron -->
<path d="M909.6 541.4L916.6 548.4L909.6 555.4" fill="none" stroke="#82e382" stroke-width="2.2" stroke-linecap="round"/>
</svg>

<div class="t" id="t0" style="left:142px;top:33.9px;font-size:14px;font-weight:bold;color:#f2f2f2;letter-spacing:0.2px;transform:scaleX(1.0156);transform-origin:0 0;">SCENE</div>
<div class="t" id="t1" style="left:311.2px;top:33.9px;font-size:14px;font-weight:bold;color:#f2f2f2;letter-spacing:0.2px;transform:scaleX(0.9938);transform-origin:0 0;">TRAJECTORIES</div>
<div class="t" id="t2" style="left:1051px;top:67.3px;font-size:13px;color:#f4f4f4;transform:scaleX(0.9532);transform-origin:0 0;">Saved pos.</div>
<div class="t" id="t3" style="left:937px;top:103.3px;font-size:14px;font-weight:bold;color:#fff;transform:scaleX(1.0057);transform-origin:0 0;">UR3e</div>
<div class="t" id="t4" style="left:967px;top:132.1px;font-size:14px;font-weight:bold;color:#fff;transform:scaleX(0.9724);transform-origin:0 0;">Saved positions</div>
<div class="t" id="t5" style="left:965.4px;top:174.3px;font-size:14px;color:#fff;transform:scaleX(0.9904);transform-origin:0 0;">Home</div>
<div class="t" id="t6" style="left:1032.7px;top:213.0px;font-size:12.5px;color:#e8eaff;transform:scaleX(0.8615);transform-origin:0 0;">Move to by linear</div>
<div class="t" id="t7" style="left:947.4px;top:248.4px;font-size:14px;font-weight:bold;color:#f0f0f0;transform:scaleX(0.9505);transform-origin:0 0;">Position</div>
<div class="t" id="t8" style="left:947.4px;top:371.3px;font-size:14px;font-weight:bold;color:#f0f0f0;transform:scaleX(0.9372);transform-origin:0 0;">Rotation</div>
<div class="t" id="t9" style="left:947.4px;top:494.8px;font-size:14px;font-weight:bold;color:#f0f0f0;transform:scaleX(0.9027);transform-origin:0 0;">Axis</div>
<div class="t" id="t10" style="left:957.3px;top:275.3px;font-size:14px;color:#f0f0f0;transform:scaleX(0.9632);transform-origin:0 0;">X</div>
<div class="t" id="t11" style="left:997.2px;top:275.3px;font-size:14px;color:#5d6ad6;">218.48<span style="font-size:12px;color:#f0f0f0;margin-left:3px">mm</span></div>
<div class="t" id="t12" style="left:957.3px;top:302.0px;font-size:14px;color:#f0f0f0;transform:scaleX(0.9632);transform-origin:0 0;">Y</div>
<div class="t" id="t13" style="left:997.2px;top:302.0px;font-size:14px;color:#5d6ad6;">3.45<span style="font-size:12px;color:#f0f0f0;margin-left:3px">mm</span></div>
<div class="t" id="t14" style="left:957.3px;top:329.1px;font-size:14px;color:#f0f0f0;transform:scaleX(0.9927);transform-origin:0 0;">Z</div>
<div class="t" id="t15" style="left:997.2px;top:329.1px;font-size:14px;color:#5d6ad6;">341.94<span style="font-size:12px;color:#f0f0f0;margin-left:3px">mm</span></div>
<div class="t" id="t16" style="left:957.3px;top:398.3px;font-size:14px;color:#f0f0f0;transform:scaleX(0.9168);transform-origin:0 0;">Rx</div>
<div class="t" id="t17" style="left:997.2px;top:398.3px;font-size:14px;color:#5d6ad6;">160.37<span style="font-size:12px;color:#f0f0f0;margin-left:3px">°</span></div>
<div class="t" id="t18" style="left:957.3px;top:425.5px;font-size:14px;color:#f0f0f0;transform:scaleX(0.9168);transform-origin:0 0;">Ry</div>
<div class="t" id="t19" style="left:997.2px;top:425.5px;font-size:14px;color:#5d6ad6;">42.97<span style="font-size:12px;color:#f0f0f0;margin-left:3px">°</span></div>
<div class="t" id="t20" style="left:957.3px;top:452.0px;font-size:14px;color:#f0f0f0;transform:scaleX(0.9168);transform-origin:0 0;">Rz</div>
<div class="t" id="t21" style="left:997.2px;top:452.0px;font-size:14px;color:#5d6ad6;">-97.24<span style="font-size:12px;color:#f0f0f0;margin-left:3px">°</span></div>
<div class="t" id="t22" style="left:957.3px;top:521.5px;font-size:14px;color:#f0f0f0;transform:scaleX(0.9168);transform-origin:0 0;">A1</div>
<div class="t" id="t23" style="left:997.2px;top:521.5px;font-size:14px;color:#5d6ad6;">18.04<span style="font-size:12px;color:#f0f0f0;margin-left:3px">°</span></div>
<div class="t" id="t24" style="left:957.3px;top:548.5px;font-size:14px;color:#f0f0f0;transform:scaleX(0.9168);transform-origin:0 0;">A2</div>
<div class="t" id="t25" style="left:997.2px;top:548.5px;font-size:14px;color:#5d6ad6;">-69.59<span style="font-size:12px;color:#f0f0f0;margin-left:3px">°</span></div>
<div class="t" id="t26" style="left:957.3px;top:575.5px;font-size:14px;color:#f0f0f0;transform:scaleX(0.9168);transform-origin:0 0;">A3</div>
<div class="t" id="t27" style="left:997.2px;top:575.5px;font-size:14px;color:#5d6ad6;">-102.60<span style="font-size:12px;color:#f0f0f0;margin-left:3px">°</span></div>
<div class="t" id="t28" style="left:957.3px;top:602.5px;font-size:14px;color:#f0f0f0;transform:scaleX(0.9168);transform-origin:0 0;">A4</div>
<div class="t" id="t29" style="left:997.2px;top:602.5px;font-size:14px;color:#5d6ad6;">-100.28<span style="font-size:12px;color:#f0f0f0;margin-left:3px">°</span></div>
<div class="t" id="t30" style="left:957.3px;top:629.5px;font-size:14px;color:#f0f0f0;transform:scaleX(0.9168);transform-origin:0 0;">A5</div>
<div class="t" id="t31" style="left:997.2px;top:629.5px;font-size:14px;color:#5d6ad6;">136.38<span style="font-size:12px;color:#f0f0f0;margin-left:3px">°</span></div>
<div class="t" id="t32" style="left:957.3px;top:656.5px;font-size:14px;color:#f0f0f0;transform:scaleX(0.9168);transform-origin:0 0;">A6</div>
<div class="t" id="t33" style="left:997.2px;top:656.5px;font-size:14px;color:#5d6ad6;">16.43<span style="font-size:12px;color:#f0f0f0;margin-left:3px">°</span></div>
<div class="t" id="t34" style="left:1029.3px;top:853.6px;font-size:13px;font-weight:bold;color:#fff;transform:scaleX(0.8927);transform-origin:0 0;">Add new position</div>
<div class="t" id="t35" style="left:964.5px;top:902.5px;font-size:14px;font-weight:bold;color:#fff;transform:scaleX(0.9894);transform-origin:0 0;">Robot Control</div>
<div class="t" id="t36" style="left:941.6px;top:929.2px;font-size:13px;font-style:italic;color:#9a9a9a;transform:scaleX(0.9151);transform-origin:0 0;">With advanced features you could manage your real</div>
<div class="t" id="t37" style="left:1062.6px;top:941.9px;font-size:13px;font-style:italic;color:#9a9a9a;transform:scaleX(0.9744);transform-origin:0 0;">robot:</div>
</body></html>
